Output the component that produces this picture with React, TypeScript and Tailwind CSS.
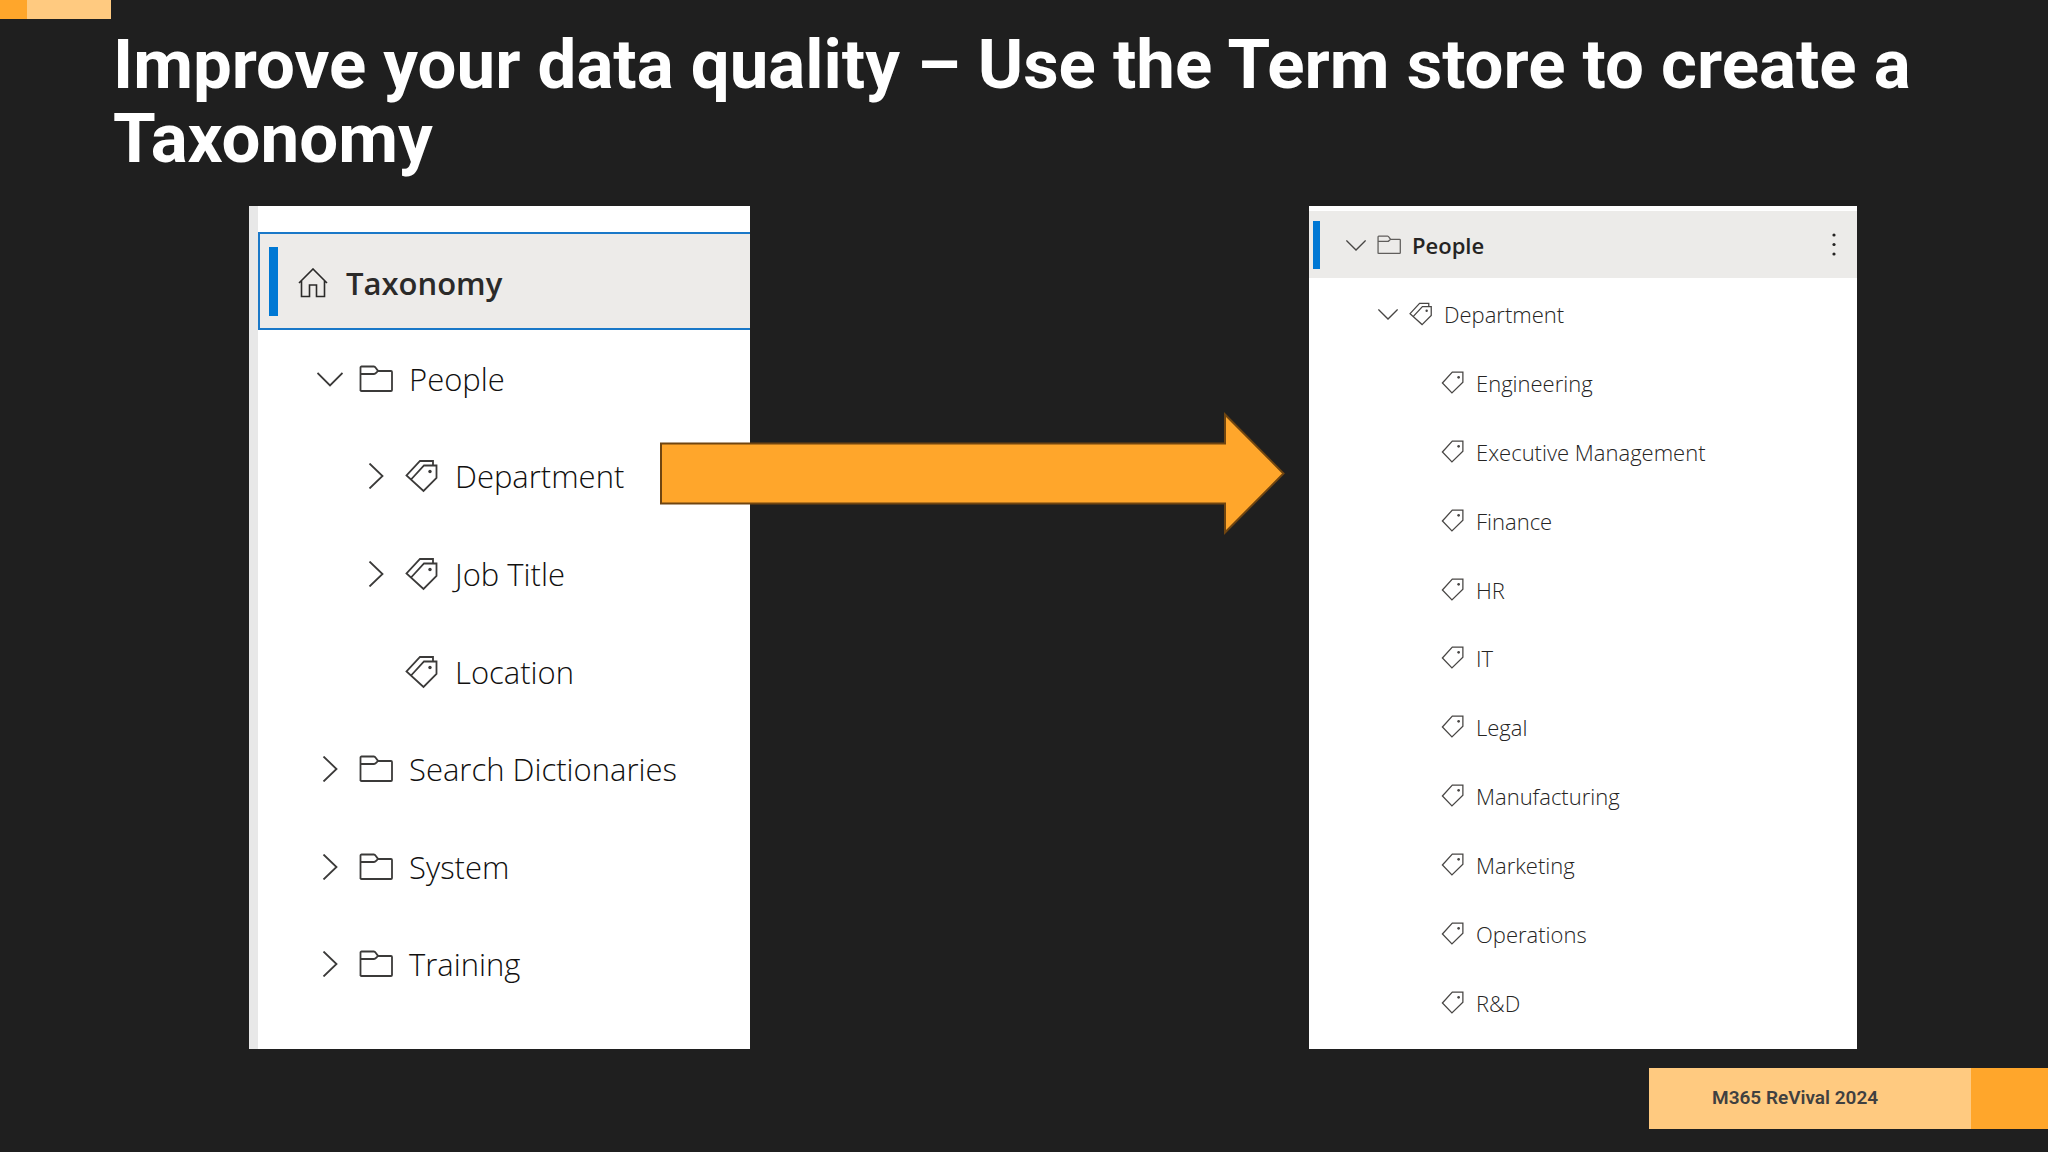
import React from 'react';

type IconName = 'folder' | 'tags' | 'tag';

type TermNode = {
  label: string;
  level: number;
  icon: IconName;
  chevron?: 'right' | 'down';
};

const groups: TermNode[] = [
  { label: 'People', level: 0, icon: 'folder', chevron: 'down' },
  { label: 'Department', level: 1, icon: 'tags', chevron: 'right' },
  { label: 'Job Title', level: 1, icon: 'tags', chevron: 'right' },
  { label: 'Location', level: 1, icon: 'tags' },
  { label: 'Search Dictionaries', level: 0, icon: 'folder', chevron: 'right' },
  { label: 'System', level: 0, icon: 'folder', chevron: 'right' },
  { label: 'Training', level: 0, icon: 'folder', chevron: 'right' },
];

const departments: TermNode[] = [
  { label: 'Department', level: 1, icon: 'tags', chevron: 'down' },
  { label: 'Engineering', level: 2, icon: 'tag' },
  { label: 'Executive Management', level: 2, icon: 'tag' },
  { label: 'Finance', level: 2, icon: 'tag' },
  { label: 'HR', level: 2, icon: 'tag' },
  { label: 'IT', level: 2, icon: 'tag' },
  { label: 'Legal', level: 2, icon: 'tag' },
  { label: 'Manufacturing', level: 2, icon: 'tag' },
  { label: 'Marketing', level: 2, icon: 'tag' },
  { label: 'Operations', level: 2, icon: 'tag' },
  { label: 'R&D', level: 2, icon: 'tag' },
];

const largeIndent = ['pl-[59px]', 'pl-[105px]'];
const smallIndent = ['pl-[37px]', 'pl-[69px]', 'pl-[101px]'];

const NodeIcon = ({ name, className }: { name: IconName; className: string }) => (
  <svg className={className} viewBox="0 0 34 34" fill="none" stroke="currentColor" strokeWidth={1.8}>
    {name === 'folder' && (
      <path d="M1.500 29V5.500a1 1 0 0 1 1-1H15c2 0 2.500 3.500 4.500 4.500H32a1 1 0 0 1 1 1V28a1 1 0 0 1-1 1H2.500a1 1 0 0 1-1-1M1.500 12H15c2 0 2.500-2.500 4.500-3" />
    )}
    {name === 'tags' && (
      <>
        <path d="M6.500 20 19 6.500h12.500V19L18.500 32 1.500 16.500 15 2h13v4" />
        <circle cx="25" cy="12.500" r="1.700" fill="currentColor" stroke="none" />
      </>
    )}
    {name === 'tag' && (
      <>
        <path d="M2 17 16 1.500h15V16L15.500 31z" />
        <circle cx="25" cy="9" r="1.900" fill="currentColor" stroke="none" />
      </>
    )}
  </svg>
);

const Chevron = ({ direction, className }: { direction: 'right' | 'down'; className: string }) => (
  <svg className={className} viewBox="0 0 26 26" fill="none" stroke="currentColor" strokeWidth={1.8}>
    <path d={direction === 'down' ? 'M.5 7 13 19.500 25.500 7' : 'M6.500.5 19.500 13 6.500 25.500'} />
  </svg>
);

const TermRow = ({ node, large }: { node: TermNode; large?: boolean }) => {
  const indent = large ? largeIndent[node.level] : smallIndent[node.level];
  const chevronSize = large ? 'w-[26px] text-[#3b3a39]' : 'w-5 text-[#484644]';
  const iconSize = large ? 'w-[34px] text-[#3b3a39]' : 'w-6 text-[#484644]';

  return (
    <li className={`flex flex-1 items-center ${large ? 'gap-4' : 'gap-[11px]'} ${indent}`}>
      {node.chevron ? (
        <button
          className={`shrink-0 ${chevronSize}`}
          aria-label={`Toggle ${node.label}`}
          aria-expanded={node.chevron === 'down'}
        >
          <Chevron direction={node.chevron} className="w-full" />
        </button>
      ) : (
        <span className={`shrink-0 ${chevronSize}`} />
      )}
      <button className={`flex items-center whitespace-nowrap ${large ? 'gap-4' : 'gap-[11px]'}`}>
        <NodeIcon name={node.icon} className={`shrink-0 ${iconSize}`} />
        {node.label}
      </button>
    </li>
  );
};

const TaxonomyPanel = () => (
  <section className="flex flex-col border-l-[9px] border-[#e8e8e8] bg-white pt-[26px] pb-[36px] text-[31px] leading-10 font-light text-[#11100f]">
    <div className="flex h-[98px] shrink-0 items-center border-2 border-r-0 border-[#1a78c8] bg-[#edebe9] pl-[9px]">
      <span className="h-[69px] w-[9px] bg-[#0078d4]" />
      <button className="ml-5 flex items-center gap-[18px] pt-1 font-semibold text-[#2b2a29]">
        <svg className="w-[30px]" viewBox="0 0 30 30" fill="none" stroke="currentColor" strokeWidth={1.6}>
          <path d="M1 15 15 1l14 14M3.500 13v15.500h8V17h7v11.500h8V13" />
        </svg>
        Taxonomy
      </button>
    </div>
    <ul className="flex flex-1 flex-col">
      {groups.map((node) => (
        <TermRow key={node.label} node={node} large />
      ))}
    </ul>
  </section>
);

const PeoplePanel = () => (
  <section className="flex flex-col bg-white pt-[5px] pb-3 text-[22px] leading-8 font-light text-[#252423]">
    <div className="flex h-[67px] shrink-0 items-center bg-[#ecebe9] pr-[17px] pl-1">
      <span className="h-12 w-[7px] bg-[#0078d4]" />
      <button className="ml-[26px] w-5 shrink-0 text-[#484644]" aria-label="Toggle People" aria-expanded="true">
        <Chevron direction="down" className="w-full" />
      </button>
      <button className="ml-[11px] flex items-center gap-[11px] font-semibold">
        <NodeIcon name="folder" className="w-6 shrink-0 text-[#605e5c]" />
        People
      </button>
      <button className="ml-auto" aria-label="More options">
        <svg className="h-6 w-3" viewBox="0 0 12 24" fill="currentColor">
          <circle cx="6" cy="2" r="1.600" />
          <circle cx="6" cy="11.500" r="1.600" />
          <circle cx="6" cy="21" r="1.600" />
        </svg>
      </button>
    </div>
    <ul className="mt-0.5 flex flex-1 flex-col">
      {departments.map((node) => (
        <TermRow key={node.label} node={node} />
      ))}
    </ul>
  </section>
);

export default function App() {
  return (
    <div className="relative flex min-h-screen flex-col bg-[#1f1f1f] font-['Roboto',sans-serif]">
      {/* Corner accent */}
      <div className="absolute top-0 left-0 flex h-[19px]">
        <span className="w-[27px] bg-[#ffa62b]" />
        <span className="w-[84px] bg-[#ffca80]" />
      </div>

      <h1 className="px-[113px] pt-7 text-[69px] leading-[74px] font-bold text-white">
        Improve your data quality – Use the Term store to create a Taxonomy
      </h1>

      <main className="mt-[30px] grid flex-1 grid-cols-[249fr_501fr_559fr_548fr_191fr] font-['Open_Sans','Noto_Sans',sans-serif]">
        <div />
        <TaxonomyPanel />
        <div className="relative">
          {/* Arrow starts over the left panel */}
          <div className="absolute top-[206px] right-[24px] left-[-90px]">
            <svg className="w-full" viewBox="0 0 625 123" fill="#ffa62b" stroke="#704510" strokeWidth={2}>
              <path d="M1 31.500h564V2.500L623.500 61.500 565 120.500V91.500H1z" />
            </svg>
          </div>
        </div>
        <PeoplePanel />
        <div />
      </main>

      <footer className="mt-[19px] mb-[23px] flex h-[61px] justify-end">
        <div className="flex w-[322px] items-center bg-[#ffca80] pb-0.5 pl-[63px] text-[19px] leading-6 font-semibold text-[#404040]">
          M365 ReVival 2024
        </div>
        <div className="w-[77px] bg-[#ffa62b]" />
      </footer>
    </div>
  );
}
